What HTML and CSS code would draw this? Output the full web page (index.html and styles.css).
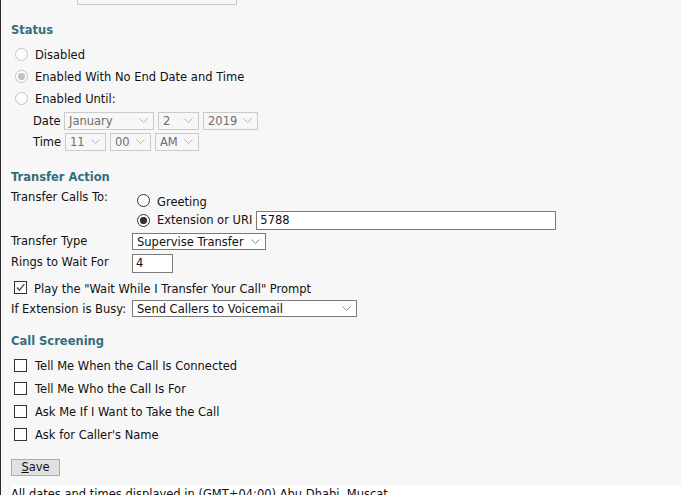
FILE: index.html
```html
<!DOCTYPE html>
<html>
<head>
<meta charset="utf-8">
<link rel="stylesheet" href="styles.css">
</head>
<body>
<div class="page">
  <div class="content">
    <div class="select disabled top-select"><span>Standard</span><svg class="chev" width="9" height="5" viewBox="0 0 9 5"><path d="M0.5 0.5 L4.5 4.5 L8.5 0.5"/></svg></div>

    <h3 class="section-title status-title">Status</h3>
    <div class="radio-list">
      <label class="opt"><input type="radio" name="st" class="radio" disabled>Disabled</label>
      <label class="opt"><input type="radio" name="st" class="radio" disabled checked>Enabled With No End Date and Time</label>
      <label class="opt"><input type="radio" name="st" class="radio" disabled>Enabled Until:</label>
    </div>
    <div class="datetime">
      <div class="dt-row">
        <span class="dt-label date-label">Date</span>
        <div class="select disabled w-month"><span>January</span><svg class="chev" width="9" height="5" viewBox="0 0 9 5"><path d="M0.5 0.5 L4.5 4.5 L8.5 0.5"/></svg></div>
        <div class="select disabled w-day"><span>2</span><svg class="chev" width="9" height="5" viewBox="0 0 9 5"><path d="M0.5 0.5 L4.5 4.5 L8.5 0.5"/></svg></div>
        <div class="select disabled w-year"><span>2019</span><svg class="chev" width="9" height="5" viewBox="0 0 9 5"><path d="M0.5 0.5 L4.5 4.5 L8.5 0.5"/></svg></div>
      </div>
      <div class="dt-row">
        <span class="dt-label time-label">Time</span>
        <div class="select disabled w-hour"><span>11</span><svg class="chev" width="9" height="5" viewBox="0 0 9 5"><path d="M0.5 0.5 L4.5 4.5 L8.5 0.5"/></svg></div>
        <div class="select disabled w-hour"><span>00</span><svg class="chev" width="9" height="5" viewBox="0 0 9 5"><path d="M0.5 0.5 L4.5 4.5 L8.5 0.5"/></svg></div>
        <div class="select disabled w-ampm"><span>AM</span><svg class="chev" width="9" height="5" viewBox="0 0 9 5"><path d="M0.5 0.5 L4.5 4.5 L8.5 0.5"/></svg></div>
      </div>
    </div>

    <h3 class="section-title transfer-title">Transfer Action</h3>
    <div class="form-row calls-row">
      <div class="row-label calls-label">Transfer Calls To:</div>
      <div class="choices">
        <label class="opt choice-1"><input type="radio" name="tc" class="radio active">Greeting</label>
        <label class="opt choice-2"><input type="radio" name="tc" class="radio active" checked>Extension or URI<span class="textbox ext-box">5788</span></label>
      </div>
    </div>
    <div class="form-row type-row">
      <div class="row-label raised">Transfer Type</div>
      <div class="select w-type"><span>Supervise Transfer</span><svg class="chev" width="9" height="5" viewBox="0 0 9 5"><path d="M0.5 0.5 L4.5 4.5 L8.5 0.5"/></svg></div>
    </div>
    <div class="form-row rings-row">
      <div class="row-label raised">Rings to Wait For</div>
      <span class="textbox rings-box">4</span>
    </div>
    <div class="check-row play-row">
      <span class="check"><svg width="11" height="11" viewBox="0 0 11 11"><path d="M2 5.5 L4.5 8.2 L9.3 2.2"/></svg></span>Play the "Wait While I Transfer Your Call" Prompt
    </div>
    <div class="form-row busy-row">
      <div class="row-label">If Extension is Busy:</div>
      <div class="select w-busy"><span>Send Callers to Voicemail</span><svg class="chev" width="9" height="5" viewBox="0 0 9 5"><path d="M0.5 0.5 L4.5 4.5 L8.5 0.5"/></svg></div>
    </div>

    <h3 class="section-title screening-title">Call Screening</h3>
    <div class="check-list">
      <div class="check-row"><span class="check"></span>Tell Me When the Call Is Connected</div>
      <div class="check-row"><span class="check"></span>Tell Me Who the Call Is For</div>
      <div class="check-row"><span class="check"></span>Ask Me If I Want to Take the Call</div>
      <div class="check-row"><span class="check"></span>Ask for Caller's Name</div>
    </div>

    <button class="save-btn" type="button"><u>S</u>ave</button>
  </div>
  <div class="footer">All dates and times displayed in (GMT+04:00) Abu Dhabi, Muscat</div>
</div>
</body>
</html>
```

FILE: styles.css
```css
html, body {
  margin: 0;
  padding: 0;
  background: #f7f7f7;
  height: 100%;
  overflow: hidden;
}

body {
  font-family: "DejaVu Sans", Verdana, sans-serif;
  font-size: 11.5px;
  color: #111;
}

.page {
  border-left: 1px solid #2b2b2b;
  min-height: 100%;
  background: #f7f7f7;
}

.content {
  padding-left: 10px;
}

.section-title {
  margin: 0;
  height: 16px;
  line-height: 16px;
  font-size: 11.5px;
  font-weight: bold;
  color: #336e7b;
}

.status-title { margin-top: 17px; }
.transfer-title { margin-top: 17px; }
.screening-title { margin-top: 15px; }

/* selects */
.select {
  box-sizing: border-box;
  display: flex;
  align-items: center;
  justify-content: space-between;
  height: 18px;
  padding: 0 5px 0 4px;
  border: 1px solid #7a7a7a;
  background: #fff;
  color: #111;
  white-space: nowrap;
  overflow: hidden;
}

.select .chev {
  flex: none;
  fill: none;
  stroke: #8a8a8a;
  stroke-width: 1;
}

.select.disabled {
  border-color: #cacaca;
  background: #f7f7f7;
  color: #6e6e6e;
}

.select.disabled .chev { stroke: #b4b4b4; }

.top-select {
  margin-top: -13px;
  margin-left: 66px;
  width: 160px;
  background: #efefef;
}

/* radios */
.radio-list {
  margin-top: 5px;
}

.opt {
  display: flex;
  align-items: center;
  height: 22px;
  box-sizing: border-box;
}

.radio-list .opt { padding-top: 2px; }
.radio-list .radio { margin-top: -2px; }

.radio {
  appearance: none;
  -webkit-appearance: none;
  box-sizing: border-box;
  width: 13px;
  height: 13px;
  margin: 0 7px 0 4px;
  border-radius: 50%;
  border: 1px solid #c3c3c3;
  background: #fdfdfd;
  flex: none;
}

.radio:checked {
  background: radial-gradient(circle, #c2c2c2 0 3.4px, #fdfdfd 3.9px);
}

.radio.active {
  border-color: #333;
  background: #fff;
}

.radio.active:checked {
  background: radial-gradient(circle, #333 0 3.4px, #fff 3.9px);
}

/* date / time */
.datetime {
  margin-top: 1px;
}

.dt-row {
  display: flex;
  align-items: center;
  height: 21px;
  gap: 4px;
}

.dt-label { flex: none; }
.date-label { margin-left: 22px; width: 27px; }
.time-label { margin-left: 22px; width: 28px; }

.w-month { width: 90px; }
.w-day { width: 41px; }
.w-year { width: 55px; }
.w-hour { width: 41px; }
.w-ampm { width: 44px; }

/* form rows */
.form-row {
  display: flex;
  align-items: center;
}

.row-label {
  width: 121px;
  flex: none;
}

.row-label.raised { margin-top: -2px; }

.calls-row {
  margin-top: 6px;
  align-items: flex-start;
}

.calls-label {
  line-height: 13px;
}

.choices .opt { height: 19px; }
.choices .choice-1 { padding-top: 2px; }
.choices .choice-1 .radio { margin-top: -2px; }
.choices .choice-2 { height: 20px; }
.choices .radio { margin-left: 5px; }

.textbox {
  box-sizing: border-box;
  display: flex;
  align-items: center;
  border: 1px solid #7a7a7a;
  background: #fff;
  padding-left: 3px;
}

.ext-box {
  width: 300px;
  height: 19px;
  margin-left: 4px;
}

.type-row { margin-top: 2px; height: 19px; }
.w-type { width: 134px; height: 17px; }

.rings-row { margin-top: 2px; height: 20px; }
.rings-box { width: 41px; height: 19px; }

.busy-row { margin-top: 1px; height: 19px; }
.w-busy { width: 225px; height: 17px; }

/* checkboxes */
.check-row {
  display: flex;
  align-items: center;
  height: 23px;
  box-sizing: border-box;
}

.play-row {
  margin-top: 4px;
  height: 21px;
  padding-top: 2px;
}

.play-row .check { margin-top: -2px; margin-right: 7px; }

.check-list { margin-top: 5px; }

.check {
  box-sizing: border-box;
  width: 13px;
  height: 13px;
  margin: 0 8px 0 3px;
  border: 1px solid #333;
  background: #fff;
  flex: none;
  display: flex;
  align-items: center;
  justify-content: center;
}

.check svg {
  fill: none;
  stroke: #4a4a4a;
  stroke-width: 1.3;
}

/* save */
.save-btn {
  display: block;
  box-sizing: border-box;
  margin: 13px 0 0 0;
  width: 49px;
  height: 17px;
  padding: 0;
  border: 1px solid #adadad;
  background: #e1e1e1;
  font-family: "DejaVu Sans", Verdana, sans-serif;
  font-size: 11.5px;
  color: #111;
  line-height: 15px;
}

.footer {
  margin-top: 9px;
  margin-left: 10px;
  padding-top: 2px;
  background: #fff;
  line-height: 15px;
  height: 40px;
}
```
